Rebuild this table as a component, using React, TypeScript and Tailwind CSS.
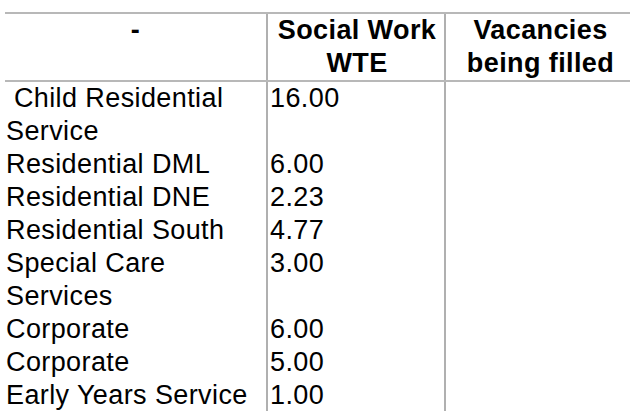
import React from "react";

const rows: [React.ReactNode, string][] = [
  [<>{"\u00a0"}Child Residential<br />Service</>, "16.00"],
  ["Residential DML", "6.00"],
  ["Residential DNE", "2.23"],
  ["Residential South", "4.77"],
  [<>Special Care<br />Services</>, "3.00"],
  ["Corporate", "6.00"],
  ["Corporate", "5.00"],
  ["Early Years Service", "1.00"],
];

export default function App() {
  return (
    <div
      className="w-[630px] h-[411px] overflow-hidden bg-white text-black"
      style={{ fontFamily: '"Liberation Sans", Arial, sans-serif' }}
    >
      <div className="ml-[5px] mt-[12px] w-[630px] text-[27px] leading-[33px] tracking-[0.4px]">
        <div className="grid grid-cols-[261px_178px_191px] border-t-2 border-b-2 border-[#b8b8b8] font-bold text-center">
          <div className="h-[66px]">-</div>
          <div className="border-l-2 border-[#b0b0b0] pl-[2px]">
            Social Work
            <br />
            WTE
          </div>
          <div className="border-l-2 border-[#b0b0b0]">
            Vacancies
            <br />
            being filled
          </div>
        </div>
        <div className="grid grid-cols-[261px_178px_191px]">
          {rows.map(([label, val], i) => (
            <React.Fragment key={i}>
              <div className="pl-px">{label}</div>
              <div className="border-l-2 border-[#b0b0b0] pl-[2px]">{val}</div>
              <div className="border-l-2 border-[#b0b0b0]"></div>
            </React.Fragment>
          ))}
        </div>
      </div>
    </div>
  );
}
